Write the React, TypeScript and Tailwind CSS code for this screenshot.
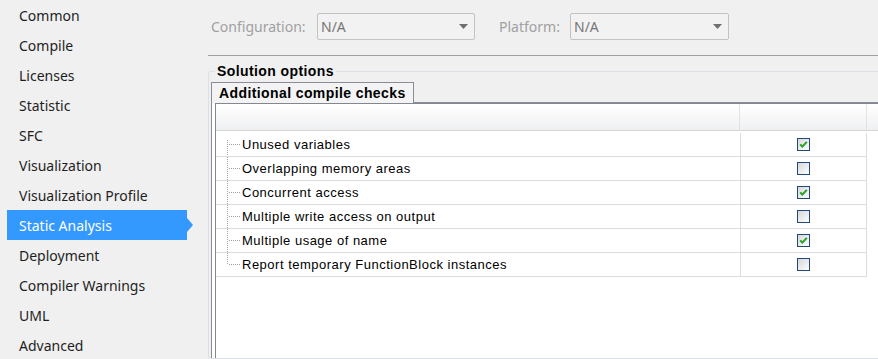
import React from "react";

const items = [
  "Common",
  "Compile",
  "Licenses",
  "Statistic",
  "SFC",
  "Visualization",
  "Visualization Profile",
  "Static Analysis",
  "Deployment",
  "Compiler Warnings",
  "UML",
  "Advanced",
];

const rows: [string, boolean][] = [
  ["Unused variables", true],
  ["Overlapping memory areas", false],
  ["Concurrent access", true],
  ["Multiple write access on output", false],
  ["Multiple usage of name", true],
  ["Report temporary FunctionBlock instances", false],
];

function Combo({ w }: { w: string }) {
  return (
    <div
      className={`${w} h-[27px] border border-[#c3c3c3] rounded-[2px] bg-[#f2f2f2] flex items-center justify-between pl-[3px] pr-[6px]`}
    >
      <span className="text-[14px] text-[#767676] font-['Noto_Sans',sans-serif] leading-none">N/A</span>
      <svg width="9" height="5" viewBox="0 0 9 5">
        <path d="M0 0H9L4.5 5Z" fill="#6f6f6f" />
      </svg>
    </div>
  );
}

function CheckBox({ checked }: { checked: boolean }) {
  return (
    <svg width="13" height="13" viewBox="0 0 13 13">
      <defs>
        <linearGradient id="cbg" x1="0" y1="0" x2="1" y2="1">
          <stop offset="0" stopColor="#d6d6d6" />
          <stop offset="1" stopColor="#ffffff" />
        </linearGradient>
      </defs>
      <rect x="0.5" y="0.5" width="12" height="12" fill="url(#cbg)" stroke="#1f4a77" />
      {checked && (
        <path d="M3.2 6.4L5.3 8.6L9.8 3.9" fill="none" stroke="#22a022" strokeWidth="2" />
      )}
    </svg>
  );
}

function TreeLine({ i, n }: { i: number; n: number }) {
  const y1 = i === 0 ? 7 : 0;
  const y2 = i === n - 1 ? 12 : 23;
  return (
    <svg width="13" height="23" viewBox="0 0 13 23" className="shrink-0">
      <line x1="0.5" y1={y1} x2="0.5" y2={y2} stroke="#a0a0a0" strokeDasharray="1 1" />
      <line x1="2" y1="11.5" x2="13" y2="11.5" stroke="#a0a0a0" strokeDasharray="1 1" />
    </svg>
  );
}

export default function App() {
  return (
    <div className="flex w-[878px] h-[359px] bg-[#f0f0f0] overflow-hidden">
      <nav className="w-[208px] shrink-0 flex flex-col font-['Noto_Sans',sans-serif] text-[14px]">
        {items.map((it) => {
          const sel = it === "Static Analysis";
          return (
            <div key={it} className="h-[30px] flex items-center">
              <div
                className={`ml-[7px] w-[180px] h-[30px] pl-[12px] flex items-center ${
                  sel ? "bg-[#3399ff] text-white" : "text-[#1e1e1e]"
                }`}
              >
                {it}
              </div>
              {sel && (
                <div className="w-0 h-0 border-y-[7px] border-y-transparent border-l-[6px] border-l-[#3399ff]" />
              )}
            </div>
          );
        })}
      </nav>

      <main className="flex-1 min-w-0 flex flex-col overflow-hidden">
        <div className="h-[55px] shrink-0 flex items-start pt-[13px] pl-[3px] font-['Noto_Sans',sans-serif] text-[14px] text-[#a0a0a0]">
          <div className="flex items-center h-[27px]">
            <span className="w-[106px]">Configuration:</span>
            <Combo w="w-[158px]" />
            <span className="w-[71px] ml-[24px]">Platform:</span>
            <Combo w="w-[159px]" />
          </div>
        </div>

        <div className="border-t border-[#a0a0a0] w-[700px] flex-1 flex flex-col">
          <div className="mt-[15px] border border-[#dcdfe3] rounded-[3px] flex-1 flex flex-col pl-[2px] font-['Liberation_Sans',Arial,sans-serif]">
            <div className="-mt-[9px] ml-[4px] px-[2px] w-fit bg-[#f0f0f0] leading-[16px] text-[14px] font-bold tracking-[0.4px] text-black">
              Solution options
            </div>
            <div className="flex mt-[3px]">
              <div className="w-[203px] h-[21px] border-l border-t border-r border-[#898c95] bg-[#f3f3f3] pl-[7px] flex items-center text-[14px] font-bold tracking-[0.4px] text-black leading-none">
                Additional compile checks
              </div>
              <div className="flex-1 h-[21px] border-b border-[#898c95]" />
            </div>
            <div className="flex-1 border-l border-[#898c95] bg-white pl-[3px] flex flex-col">
              <div className="flex-1 border-l border-t border-[#828790] bg-white flex flex-col">
                <div className="h-[27px] border-b border-[#d5d5d5] bg-gradient-to-b from-white to-[#eff0f2] flex">
                  <div className="w-[524px] h-full border-r border-[#e2e2e2]" />
                  <div className="w-[127px] h-full border-r border-[#e2e2e2]" />
                  <div className="flex-1" />
                </div>
                <div className="pt-[2px] flex flex-col text-[13px] tracking-[0.5px] text-black">
                  {rows.map(([label, checked], i) => (
                    <div key={label} className="flex h-[24px]">
                      <div className="w-[525px] h-[24px] border-b border-r border-[#dcdcdc] flex items-start pl-[11px]">
                        <TreeLine i={i} n={rows.length} />
                        <span className="ml-[2px] leading-[23px] whitespace-nowrap">{label}</span>
                      </div>
                      <div className="w-[126px] h-[24px] border-b border-r border-[#dcdcdc] flex items-center justify-center">
                        <CheckBox checked={checked} />
                      </div>
                    </div>
                  ))}
                </div>
              </div>
            </div>
          </div>
        </div>
      </main>
    </div>
  );
}
